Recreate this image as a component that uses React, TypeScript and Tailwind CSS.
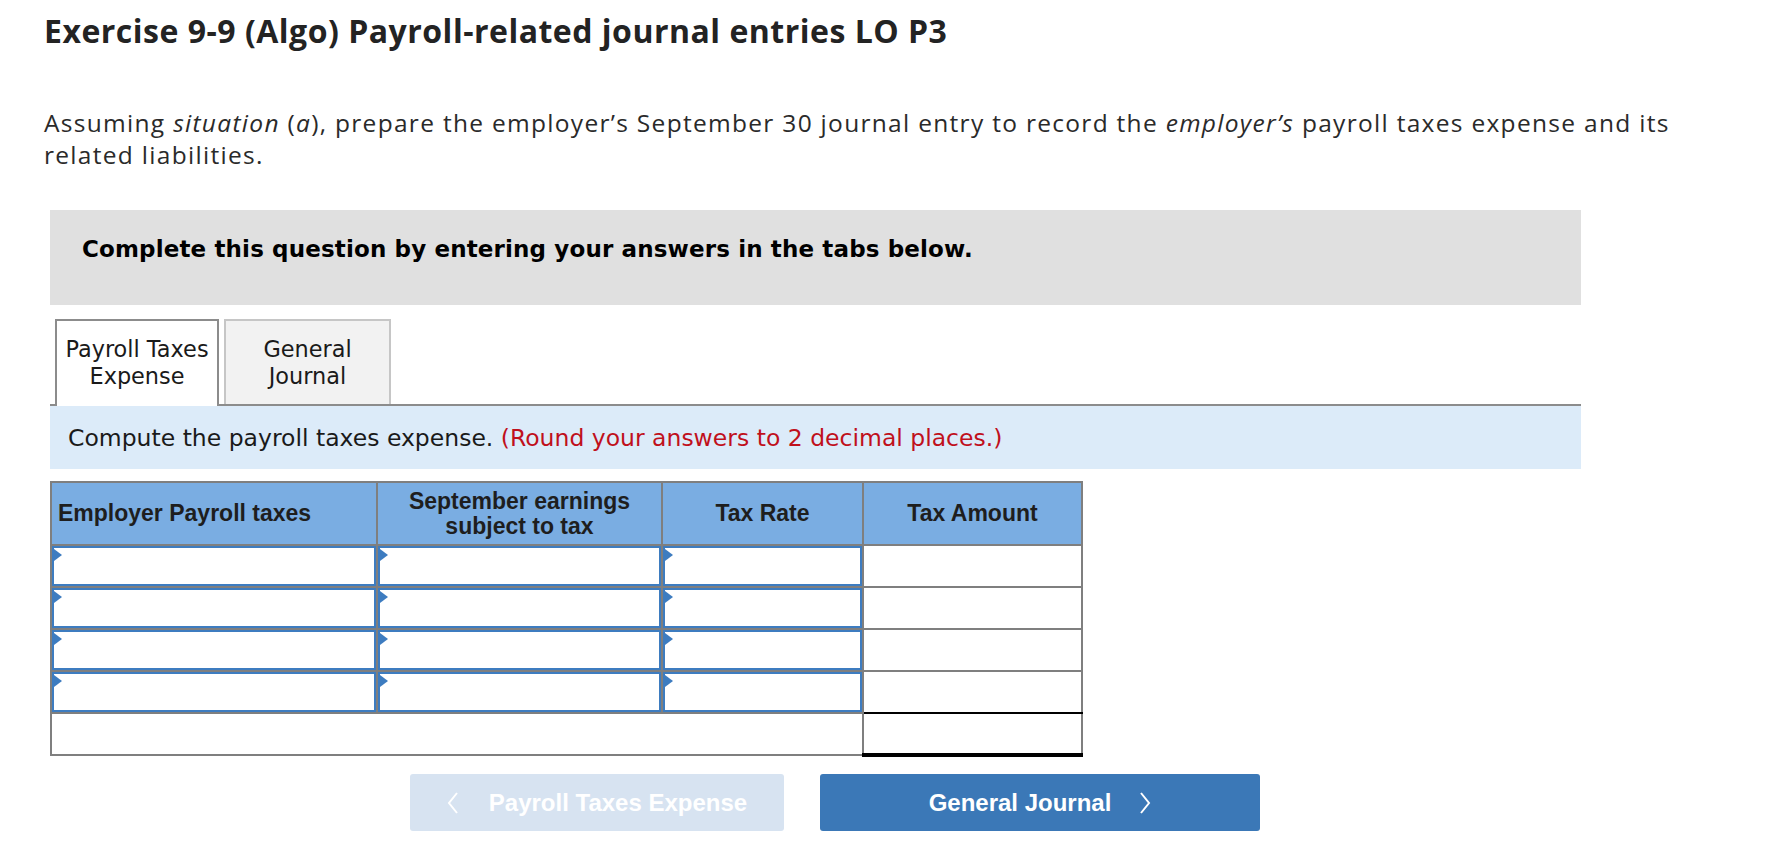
function Marker() {
  return (
    <svg className="absolute left-0 top-[1px]" width="8" height="12" viewBox="0 0 8 12">
      <path d="M0 0 L8 6 L0 12 Z" fill="#3d7cc0" />
    </svg>
  );
}

function InputCell() {
  return (
    <td className="h-[42px] border-2 border-[#7f7f7f] p-0">
      <div className="relative h-[40px] border-2 border-[#3d7cc0] bg-white">
        <Marker />
      </div>
    </td>
  );
}

function Chevron({ dir }: { dir: "left" | "right" }) {
  return (
    <svg width="12" height="24" viewBox="0 0 12 24">
      <polyline
        points={dir === "left" ? "10,2 2,12 10,22" : "2,2 10,12 2,22"}
        fill="none"
        stroke="white"
        strokeWidth="2"
      />
    </svg>
  );
}

export default function App() {
  const rows = [0, 1, 2, 3];

  return (
    <div className="min-h-screen bg-white pl-[44px] pt-[11px]">
      <h1 className="font-['Open_Sans',sans-serif] text-[32px] font-bold leading-[40px] tracking-[0.5px] text-[#232323]">
        Exercise 9-9 (Algo) Payroll-related journal entries LO P3
      </h1>

      <p className="mt-[56px] font-['Open_Sans',sans-serif] text-[24.5px] leading-[32px] tracking-[1.3px] text-[#2a2a2a]">
        Assuming <i>situation</i> (<i>a</i>), prepare the employer’s September 30 journal entry to record the{" "}
        <i>employer’s</i> payroll taxes expense and its
        <br />
        related liabilities.
      </p>

      <div className="ml-[6px] mt-[39px] w-[1531px]">
        <div className="h-[95px] bg-[#e0e0e0] pl-[32px] pt-[25px] font-['DejaVu_Sans',sans-serif] text-[23px] font-bold leading-[28px] tracking-[0.14px] text-black">
          Complete this question by entering your answers in the tabs below.
        </div>

        {/* tabs */}
        <div className="mt-[14px] flex items-end gap-[5px] border-b-2 border-[#8c8c8c] pl-[5px] font-['DejaVu_Sans',sans-serif] text-[22.4px] leading-[27px] text-[#1a1a1a]">
          <div className="relative -mb-[2px] h-[87px] w-[164px] border-2 border-b-0 border-[#8c8c8c] bg-white pt-[15px] text-center">
            Payroll Taxes
            <br />
            Expense
          </div>
          <div className="h-[85px] w-[167px] border-2 border-b-0 border-[#c6c6c6] bg-[#f2f2f2] pt-[15px] text-center">
            General
            <br />
            Journal
          </div>
        </div>

        <div className="h-[63px] bg-[#dcebf9] pl-[18px] pt-[18px] font-['DejaVu_Sans',sans-serif] text-[23.5px] leading-[28px] text-[#1a1a1a]">
          Compute the payroll taxes expense. <span className="text-[#c0101c]">(Round your answers to 2 decimal places.)</span>
        </div>

        {/* table */}
        <table className="mt-[12px] w-[1031px] table-fixed border-collapse font-['Liberation_Sans',Arial,sans-serif] text-[23px] font-bold leading-[25px] text-[#1e1e1e]">
          <colgroup>
            <col className="w-[326px]" />
            <col className="w-[285px]" />
            <col className="w-[201px]" />
            <col className="w-[219px]" />
          </colgroup>
          <thead>
            <tr>
              <th className="h-[63px] border-2 border-[#7f7f7f] bg-[#7aade2] pl-[6px] text-left font-bold">
                Employer Payroll taxes
              </th>
              <th className="border-2 border-[#7f7f7f] bg-[#7aade2] text-center font-bold">
                September earnings
                <br />
                subject to tax
              </th>
              <th className="border-2 border-[#7f7f7f] bg-[#7aade2] text-center font-bold">Tax Rate</th>
              <th className="border-2 border-[#7f7f7f] bg-[#7aade2] text-center font-bold">Tax Amount</th>
            </tr>
          </thead>
          <tbody>
            {rows.map((r) => (
              <tr key={r}>
                <InputCell />
                <InputCell />
                <InputCell />
                <td
                  className={
                    r === 3
                      ? "h-[42px] border-2 border-[#7f7f7f] border-b-black bg-white"
                      : "h-[42px] border-2 border-[#7f7f7f] bg-white"
                  }
                />
              </tr>
            ))}
            <tr>
              <td colSpan={3} className="h-[42px] border-2 border-[#7f7f7f] bg-white" />
              <td className="h-[42px] border-2 border-b-4 border-[#7f7f7f] border-t-black border-b-black bg-white" />
            </tr>
          </tbody>
        </table>

        {/* navigation */}
        <div className="ml-[360px] mt-[17px] flex gap-[36px] font-['Liberation_Sans',Arial,sans-serif] text-[24px] font-bold text-white">
          <button className="flex h-[57px] w-[374px] items-center justify-center gap-[30px] rounded-[3px] bg-[#d7e3f1]">
            <Chevron dir="left" />
            <span>Payroll Taxes Expense</span>
          </button>
          <button className="flex h-[57px] w-[440px] items-center justify-center gap-[28px] rounded-[3px] bg-[#3b78b7]">
            <span>General Journal</span>
            <Chevron dir="right" />
          </button>
        </div>
      </div>
    </div>
  );
}
